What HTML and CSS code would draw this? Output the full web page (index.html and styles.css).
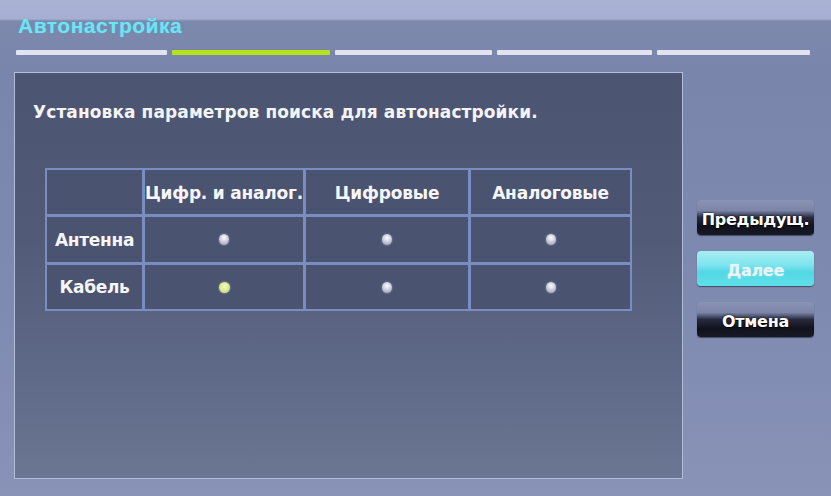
FILE: index.html
```html
<!DOCTYPE html>
<html lang="ru">
<head>
<meta charset="utf-8">
<title>Автонастройка</title>
<link rel="stylesheet" href="styles.css">
</head>
<body>
<div class="screen">
  <h1 class="title">Автонастройка</h1>
  <div class="progress">
    <span class="seg s1"></span>
    <span class="seg s2 active"></span>
    <span class="seg s3"></span>
    <span class="seg s4"></span>
    <span class="seg s5"></span>
  </div>
  <div class="main">
    <div class="panel">
      <p class="prompt">Установка параметров поиска для автонастройки.</p>
      <div class="grid">
        <div class="cell"></div>
        <div class="cell head">Цифр. и аналог.</div>
        <div class="cell head">Цифровые</div>
        <div class="cell head">Аналоговые</div>
        <div class="cell label">Антенна</div>
        <div class="cell"><span class="dot"></span></div>
        <div class="cell"><span class="dot"></span></div>
        <div class="cell"><span class="dot"></span></div>
        <div class="cell label">Кабель</div>
        <div class="cell"><span class="dot on"></span></div>
        <div class="cell"><span class="dot"></span></div>
        <div class="cell"><span class="dot"></span></div>
      </div>
    </div>
    <div class="side">
      <button class="btn">Предыдущ.</button>
      <button class="btn focus">Далее</button>
      <button class="btn">Отмена</button>
    </div>
  </div>
</div>
</body>
</html>
```
FILE: styles.css
```css
html, body {
  margin: 0;
  padding: 0;
}
body {
  width: 831px;
  height: 496px;
  overflow: hidden;
  font-family: "DejaVu Sans", "Liberation Sans", sans-serif;
  background:
    linear-gradient(180deg, #a9b2d3 0px, #a6afd1 19px, #7d88ad 21px, #7985aa 70px, #7f8ab0 300px, #8993b8 496px);
}
.screen {
  display: flex;
  flex-direction: column;
  height: 496px;
  box-sizing: border-box;
}
.title {
  margin: 0;
  padding: 14px 0 0 18px;
  font-family: "Liberation Sans", "DejaVu Sans", sans-serif;
  font-size: 21px;
  line-height: 24px;
  font-weight: bold;
  color: #6fe4f2;
  letter-spacing: 0.5px;
  text-shadow: 0 0 2px rgba(60, 200, 230, 0.5);
}
.progress {
  display: flex;
  gap: 5px;
  margin: 12px 0 0 16px;
}
.seg {
  display: block;
  height: 5px;
  background: #e1e3f1;
  border-radius: 1px;
}
.s1 { width: 151px; }
.s2 { width: 158px; }
.s3 { width: 157px; }
.s4 { width: 155px; }
.s5 { width: 153px; }
.seg.active { background: #b4e21c; }

.main {
  display: flex;
  margin-top: 17px;
  padding-left: 14px;
}
.panel {
  width: 669px;
  height: 407px;
  box-sizing: border-box;
  border: 1px solid #b3bbdb;
  background: linear-gradient(180deg, #4b5572 0%, #515b78 40%, #5f6a88 75%, #6a7692 100%);
  padding: 28px 0 0 18px;
}
.prompt {
  margin: 0;
  font-size: 17px;
  line-height: 22px;
  font-weight: bold;
  color: #f4f4f6;
  letter-spacing: 0.1px;
}
.grid {
  display: grid;
  grid-template-columns: 95px 158px 162px 159px;
  grid-template-rows: 44px 45px 44px;
  gap: 3px;
  padding: 2px;
  width: 587px;
  box-sizing: border-box;
  margin: 45px 0 0 12px;
  background: #7a8cc2;
}
.cell {
  background: #4a536f;
  display: flex;
  align-items: center;
  justify-content: center;
  color: #f6f6f8;
  font-weight: bold;
  font-size: 17px;
  overflow: hidden;
  white-space: nowrap;
}
.cell.label {
  letter-spacing: -0.3px;
}
.cell.head {
  padding-top: 1px;
  letter-spacing: -0.2px;
}
.dot {
  display: block;
  width: 10px;
  height: 11px;
  border-radius: 50%;
  background: radial-gradient(circle at 50% 35%, #ffffff 0%, #d6d9e6 35%, #8f96ad 100%);
  box-shadow: 0 0 2px rgba(220, 225, 240, 0.6);
}
.dot.on {
  width: 11px;
  height: 11px;
  background: radial-gradient(circle at 50% 40%, #f6f9c8 0%, #dce98f 50%, #a8cfa9 100%);
  box-shadow: 0 0 2px rgba(230, 240, 170, 0.7);
}

.side {
  display: flex;
  flex-direction: column;
  gap: 16px;
  margin: 128px 0 0 14px;
}
.btn {
  width: 117px;
  height: 35px;
  border: none;
  border-radius: 4px;
  padding: 3px 0 0;
  font-family: "DejaVu Sans", "Liberation Sans", sans-serif;
  font-size: 16px;
  font-weight: bold;
  color: #ffffff;
  letter-spacing: -0.3px;
  text-shadow: 0 0 2px #000, 0 1px 1px #000;
  background: linear-gradient(180deg, #8a93b4 0%, #7c85a8 30%, #262a3c 50%, #10131c 75%, #161a26 100%);
  box-shadow: 0 1px 1px rgba(30, 35, 50, 0.6);
}
.btn.focus {
  color: #e8f4f6;
  text-shadow: 0 0 2px rgba(180, 240, 245, 0.8);
  background: linear-gradient(180deg, #a8eef3 0%, #7ee4ee 40%, #52d8e4 60%, #5fdfe9 100%);
}
```
